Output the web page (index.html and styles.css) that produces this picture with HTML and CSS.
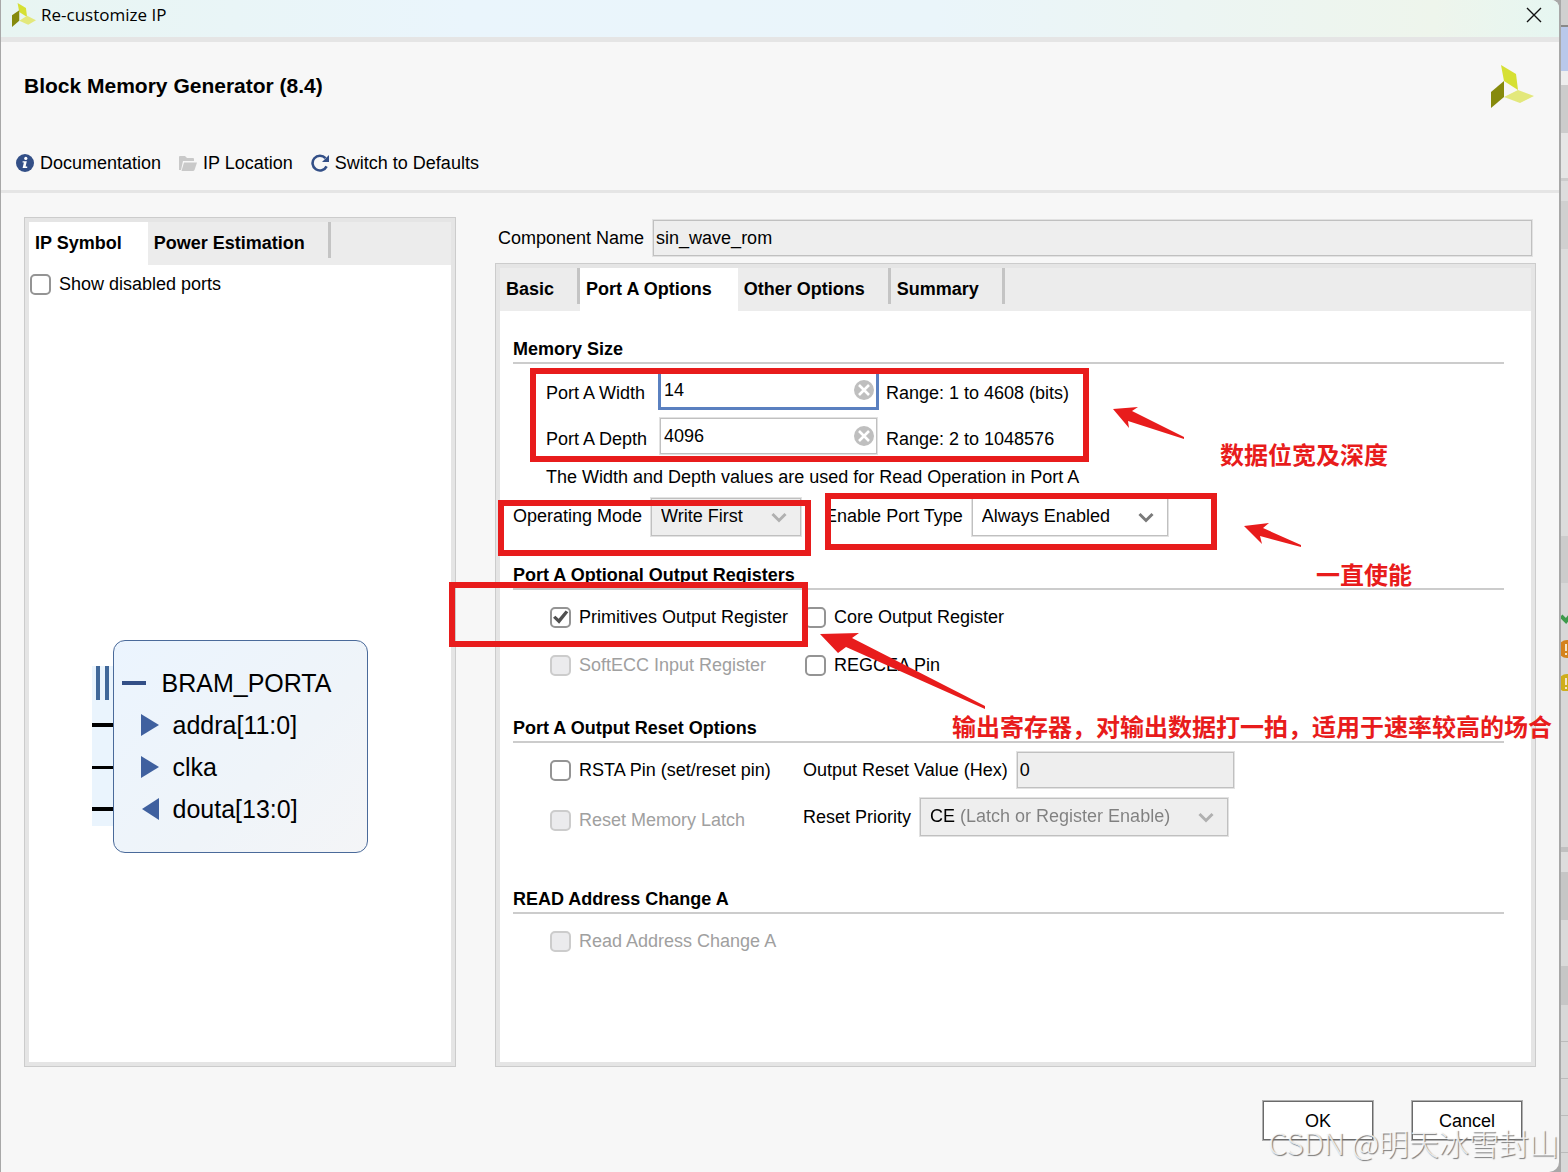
FILE: index.html
```html
<!DOCTYPE html>
<html lang="en">
<head>
    <meta charset="UTF-8">
    <meta content="width=device-width, initial-scale=1.0" name="viewport">
    <title>Re-customize IP</title>
    <link rel="stylesheet" href="styles.css">
</head>
<body>
<main class="dialog">
    <div class="titlebar">
        <svg class="titlebar-logo" viewBox="0 0 43 43">
            <path fill="#d6e034" d="M10 0 25 9 27 25 13 16z"/>
            <path fill="#868a0c" d="M0 22 13 13V32L0 43z"/>
            <path fill="#e3e87c" d="M13 32 27 23 43 31 29 39z"/>
        </svg>
        <span class="titlebar-text">Re-customize IP</span>
        <button class="close" aria-label="Close">
            <svg width="16" height="16" viewBox="0 0 16 16"><path d="M1 1 15 15M15 1 1 15" stroke="#111" stroke-width="1.4"/></svg>
        </button>
    </div>

    <header class="header">
        <div class="header-top">
            <h1>Block Memory Generator (8.4)</h1>
            <svg width="43" height="43" viewBox="0 0 43 43">
                <path fill="#d6e034" d="M10 0 25 9 27 25 13 16z"/>
                <path fill="#868a0c" d="M0 27 13 16V32L0 43z"/>
                <path fill="#e3e87c" d="M13 32 27 25 43 31 29 38z"/>
            </svg>
        </div>
        <div class="toolbar">
            <button class="tool">
                <svg width="18" height="18" viewBox="0 0 18 18">
                    <circle cx="9" cy="9" r="9" fill="#334f87"/>
                    <circle cx="9.8" cy="4.4" r="1.6" fill="#fff"/>
                    <path d="M6.6 7.2H10.8L9.6 12.6H11.2V14H6.6L7.9 8.6H6.6z" fill="#fff"/>
                </svg>
                Documentation
            </button>
            <button class="tool">
                <svg width="18" height="18" viewBox="0 0 18 18" fill="#c9c9c9">
                    <path d="M0 16V3Q0 2 1 2H6L8 4H14Q15 4 15 5V7H4L2 16z"/>
                    <path d="M5 8.5H18L15.5 16Q15 17 14 17H2.5z"/>
                </svg>
                IP Location
            </button>
            <button class="tool">
                <svg width="18" height="18" viewBox="0 0 18 18">
                    <path d="M14.5 4.2A7.4 7.4 0 1 0 15.6 12.4" fill="none" stroke="#334f87" stroke-width="2.6"/>
                    <path d="M18 1V8H11z" fill="#334f87"/>
                </svg>
                Switch to Defaults
            </button>
        </div>
    </header>

    <div class="panes">
        <section class="panel symbol-panel">
            <div class="tabs" role="tablist">
                <button class="tab active" role="tab">IP Symbol</button>
                <button class="tab" role="tab">Power Estimation</button>
            </div>
            <label class="check show-ports"><input type="checkbox"> Show disabled ports</label>
            <div class="symbol">
                <svg class="pins" width="21" height="160" viewBox="0 0 21 160">
                    <path fill="#eaf4fd" d="M0 0H21V160H0z"/>
                    <path fill="#416899" d="M4 0H8V34H4zM13 0H17V34H13z"/>
                    <path fill="#000" d="M0 57H21V61H0zM0 100H21V103H0zM0 141H21V145H0z"/>
                </svg>
                <div class="port port-group"><svg width="24" height="4"><path fill="#334f87" d="M0 0H24V4H0z"/></svg>BRAM_PORTA</div>
                <div class="port"><svg width="18" height="22"><path fill="#3f609f" d="M0 0 18 11 0 22z"/></svg>addra[11:0]</div>
                <div class="port"><svg width="18" height="22"><path fill="#3f609f" d="M0 0 18 11 0 22z"/></svg>clka</div>
                <div class="port"><svg width="18" height="22"><path fill="#3f609f" d="M18 0 1 11 18 22z"/></svg>douta[13:0]</div>
            </div>
        </section>

        <div class="config">
            <div class="name-row">
                <label for="component">Component Name</label>
                <input class="field" id="component" type="text" value="sin_wave_rom" readonly>
            </div>
            <section class="panel options-panel">
                <div class="tabs" role="tablist">
                    <button class="tab" role="tab">Basic</button>
                    <button class="tab active" role="tab">Port A Options</button>
                    <button class="tab" role="tab">Other Options</button>
                    <button class="tab" role="tab">Summary</button>
                </div>
                <div class="options">
                    <div class="group">
                        <h2>Memory Size</h2>
                        <div class="sizes">
                            <div class="size-row">
                                <label class="size-label" for="width">Port A Width</label>
                                <div class="clearable">
                                    <input class="field editable focused" id="width" type="text" value="14">
                                    <button class="clear" aria-label="Clear width">
                                        <svg width="20" height="20" viewBox="0 0 20 20"><circle cx="10" cy="10" r="10" fill="#bfbfbf"/><path d="M5 5 15 15M15 5 5 15" stroke="#fff" stroke-width="2.6"/></svg>
                                    </button>
                                </div>
                                <span class="range">Range: 1 to 4608 (bits)</span>
                            </div>
                            <div class="size-row">
                                <label class="size-label" for="depth">Port A Depth</label>
                                <div class="clearable">
                                    <input class="field editable" id="depth" type="text" value="4096">
                                    <button class="clear" aria-label="Clear depth">
                                        <svg width="20" height="20" viewBox="0 0 20 20"><circle cx="10" cy="10" r="10" fill="#bfbfbf"/><path d="M5 5 15 15M15 5 5 15" stroke="#fff" stroke-width="2.6"/></svg>
                                    </button>
                                </div>
                                <span class="range">Range: 2 to 1048576</span>
                            </div>
                        </div>
                        <p class="note">The Width and Depth values are used for Read Operation in Port A</p>
                        <div class="mode-row">
                            <label for="mode">Operating Mode</label>
                            <div class="select disabled mode-select">
                                <select id="mode" disabled><option>Write First</option></select>
                                <svg class="chevron" width="16" height="11" viewBox="0 0 16 11"><path d="M1.5 2 8 8.5 14.5 2" fill="none" stroke="currentColor" stroke-width="3"/></svg>
                            </div>
                            <label class="enable-label" for="enable">Enable Port Type</label>
                            <div class="select enable-select">
                                <select id="enable"><option>Always Enabled</option><option>Use ENA Pin</option></select>
                                <svg class="chevron" width="16" height="11" viewBox="0 0 16 11"><path d="M1.5 2 8 8.5 14.5 2" fill="none" stroke="currentColor" stroke-width="3"/></svg>
                            </div>
                        </div>
                    </div>

                    <div class="group">
                        <h2>Port A Optional Output Registers</h2>
                        <div class="checks">
                            <label class="check"><input type="checkbox" checked> Primitives Output Register</label>
                            <label class="check"><input type="checkbox"> Core Output Register</label>
                            <label class="check off"><input type="checkbox" disabled> SoftECC Input Register</label>
                            <label class="check"><input type="checkbox"> REGCEA Pin</label>
                        </div>
                    </div>

                    <div class="group reset-group">
                        <h2>Port A Output Reset Options</h2>
                        <div class="reset">
                            <div class="reset-checks">
                                <label class="check"><input type="checkbox"> RSTA Pin (set/reset pin)</label>
                                <label class="check off"><input type="checkbox" disabled> Reset Memory Latch</label>
                            </div>
                            <div class="reset-fields">
                                <div class="reset-row">
                                    <label for="resetValue">Output Reset Value (Hex)</label>
                                    <input class="field reset-value" id="resetValue" type="text" value="0" readonly>
                                </div>
                                <div class="reset-row">
                                    <label for="priority">Reset Priority</label>
                                    <div class="select disabled priority-select">
                                        <select class="two-tone" id="priority" disabled><option>CE (Latch or Register Enable)</option></select>
                                        <svg class="chevron" width="16" height="11" viewBox="0 0 16 11"><path d="M1.5 2 8 8.5 14.5 2" fill="none" stroke="currentColor" stroke-width="3"/></svg>
                                    </div>
                                </div>
                            </div>
                        </div>
                    </div>

                    <div class="group">
                        <h2>READ Address Change A</h2>
                        <div class="checks">
                            <label class="check off"><input type="checkbox" disabled> Read Address Change A</label>
                        </div>
                    </div>
                </div>
            </section>
        </div>
    </div>

    <footer class="footer">
        <button class="btn">OK</button>
        <button class="btn">Cancel</button>
    </footer>
</main>

<!-- part of the main window behind the dialog -->
<aside class="backdrop">
    <svg class="status-icons" width="9" height="80" viewBox="0 0 9 80">
        <path d="M0 5 5 10 9 5" fill="none" stroke="#3d9a4b" stroke-width="4"/>
        <circle cx="6" cy="38" r="9" fill="#d5821c"/>
        <circle cx="6" cy="72" r="9" fill="#cfae1c"/>
        <path d="M4 33H6V40H4zM4 42H6V44H4zM4 67H6V74H4zM4 76H6V78H4z" fill="#f5e6c8"/>
    </svg>
</aside>

<!-- notes drawn over the dialog -->
<div class="notes">
    <svg class="marks" width="1568" height="1172" viewBox="0 0 1568 1172">
        <g fill="none" stroke="#e81c1c" stroke-width="6">
            <rect x="533" y="371" width="553" height="88"/>
            <rect x="501" y="503" width="307" height="50"/>
            <rect x="828" y="496" width="386" height="51"/>
            <rect x="452" y="585" width="353" height="59"/>
        </g>
        <g fill="#e81c1c">
            <path d="M1113 409 1138 407 1132 411 1184 437V439L1128 421 1129 428z"/>
            <path d="M1244 526 1269 523 1263 528 1301 545V547L1260 536 1262 544z"/>
            <path d="M820 634 859 633 852 638 985 706V709L846 647 838 653z"/>
        </g>
    </svg>
    <span class="note-text note-width">数据位宽及深度</span>
    <span class="note-text note-enable">一直使能</span>
    <span class="note-text note-register">输出寄存器，对输出数据打一拍，适用于速率较高的场合</span>
    <span class="watermark">CSDN @明天冰雪封山</span>
</div>
</body>
</html>
```

FILE: styles.css
```css
* {
    box-sizing: border-box;
}
body {
    position: relative;
    display: flex;
    min-height: 100vh;
    margin: 0;
    padding-left: 1px;
    background-color: #a8a8a8;
    font-family: "Liberation Sans", Arial, sans-serif;
    font-size: 18px;
    line-height: 22px;
    color: #000;
}
button, input, select {
    font: inherit;
    color: inherit;
}
button {
    padding: 0;
    border: none;
    background: none;
}
h1, h2, p {
    margin: 0;
}
svg {
    display: block;
    flex: none;
}
.dialog {
    flex: 1;
    display: flex;
    flex-direction: column;
    background-color: #f7f7f7;
    border-radius: 0 8px 10px 0;
    overflow: hidden;
}

/* title bar */
.titlebar {
    display: flex;
    align-items: center;
    gap: 5px;
    height: 42px;
    padding: 0 17px 8px 11px;
    border-bottom: 5px solid #e5e5e5;
    background: linear-gradient(to right, #e8f5f2, #eaf5fc 30%, #eaf5fa 60%, #eef5ec 92%, #e6f6f1);
}
.titlebar-logo {
    width: 24px;
    height: 24px;
}
.titlebar-text {
    flex: 1;
    font-family: "Open Sans", "Noto Sans", sans-serif;
    font-size: 17px;
}

/* header */
.header {
    padding: 23px 25px 16px 23px;
    border-bottom: 3px solid #e5e5e5;
}
.header-top {
    display: flex;
    align-items: center;
    justify-content: space-between;
}
h1 {
    padding-bottom: 2px;
    font-size: 21px;
    line-height: 24px;
}
.toolbar {
    display: flex;
    gap: 18px;
    margin: 44px 0 0 -8px;
}
.tool {
    display: flex;
    align-items: center;
    gap: 6px;
}

/* panels and tabs */
.panes {
    flex: 1;
    display: flex;
    gap: 39px;
    padding: 24px 23px 0;
}
.panel {
    border: 1px solid #ccc;
    padding: 4px;
    background: #fff content-box;
    box-shadow: inset 0 0 0 4px #e5e5e5;
}
.symbol-panel {
    width: 432px;
}
.tabs {
    display: flex;
    align-items: flex-start;
    height: 43px;
    background-color: #ececec;
}
.tab {
    height: 36px;
    padding: 2px 23px 0 6px;
    border-right: 3px solid #c4c4c4;
    line-height: 38px;
    font-weight: bold;
}
.tab.active {
    height: 43px;
    padding-right: 26px;
    padding-bottom: 3px;
    border-right: none;
    background-color: #fff;
}
.check {
    display: flex;
    align-items: center;
    gap: 8px;
}
.check.off {
    color: #a0a0a0;
}
.check input {
    appearance: none;
    width: 21px;
    height: 21px;
    margin: 0;
    border: 2px solid #949494;
    border-radius: 5px;
    background-color: #fff;
}
.check input:disabled {
    border-color: #ccc;
    background-color: #ebebed;
}
.check input:checked::after {
    content: "";
    display: block;
    width: 17px;
    height: 17px;
    background-color: #505050;
    clip-path: polygon(6% 54%, 20% 42%, 39% 60%, 80% 12%, 96% 22%, 42% 90%);
}
.show-ports {
    height: 38px;
    padding-left: 1px;
}

/* block symbol */
.symbol {
    position: relative;
    width: 255px;
    height: 213px;
    margin: 337px auto 0;
    padding-top: 21px;
    border: 1px solid #4a6a9a;
    border-radius: 12px;
    background: linear-gradient(135deg, #ebf4fe, #eff4f9 60%, #f4f5f7);
    font-size: 25px;
}
.pins {
    position: absolute;
    top: 25px;
    right: 100%;
    margin-right: 1px;
}
.port {
    display: flex;
    align-items: center;
    gap: 14px;
    height: 42px;
    padding-left: 27px;
}
.port-group {
    gap: 16px;
    padding-left: 8px;
}

/* fields */
.config {
    flex: 1;
    display: flex;
    flex-direction: column;
}
.name-row {
    display: flex;
    align-items: center;
    gap: 8px;
    padding: 2px 3px 6px;
}
.name-row .field {
    flex: 1;
}
.field {
    height: 38px;
    padding: 0 3px;
    border: 1px solid #e2e2e2;
    box-shadow: inset 0 0 0 1px #c0c0c0;
    background-color: #eee;
    outline: none;
}
.field.editable {
    width: 100%;
    padding: 0 4px;
    background-color: #fff;
}
.field.focused {
    border-color: #5a80c0;
    outline: 2px solid #5a80c0;
    outline-offset: -1px;
    box-shadow: inset 0 0 0 1px #5a80c0;
}
.options-panel {
    flex: 1;
}
.options {
    padding: 26px 27px 0 13px;
}
.group {
    margin-bottom: 26px;
}
h2 {
    padding: 1px 0 2px;
    border-bottom: 2px solid #ccc;
    font-size: 18px;
    line-height: 22px;
}
.sizes {
    display: grid;
    gap: 8px;
    padding: 7px 0 0 33px;
}
.size-row {
    display: flex;
    align-items: center;
}
.size-label {
    width: 113px;
    padding-top: 6px;
}
.range {
    padding: 6px 0 0 8px;
}
.clearable {
    position: relative;
    width: 219px;
}
.clear {
    position: absolute;
    top: 9px;
    right: 4px;
}
.note {
    margin: 11px 0 9px;
    padding-left: 33px;
}
.mode-row {
    display: flex;
    align-items: center;
    gap: 8px;
}
.mode-row label {
    padding-bottom: 2px;
}
.enable-label {
    margin-left: 15px;
}
.select {
    position: relative;
    height: 40px;
    border: 1px solid #e2e2e2;
    box-shadow: inset 0 0 0 1px #c0c0c0;
    background-color: #fff;
}
.select.disabled {
    background-color: #eee;
}
.select select {
    appearance: none;
    width: 100%;
    height: 100%;
    padding: 0 32px 2px 10px;
    border: none;
    background-color: transparent;
    opacity: 1;
}
.chevron {
    position: absolute;
    top: 14px;
    right: 14px;
    color: #7a7a7a;
    pointer-events: none;
}
.disabled .chevron {
    color: #b0b0b0;
}
.mode-select {
    width: 152px;
}
.enable-select {
    width: 198px;
}
.priority-select {
    width: 310px;
}
.select .two-tone {
    background: linear-gradient(to right, #000 37px, #808080 37px) text;
    color: transparent;
}
.checks {
    display: grid;
    grid-template-columns: 255px 1fr;
    grid-auto-rows: 48px;
    padding: 3px 0 1px 37px;
}
.reset-group {
    margin-bottom: 36px;
}
.reset {
    display: flex;
    padding: 8px 0 0 37px;
}
.reset-checks {
    width: 253px;
}
.reset-checks .check {
    height: 38px;
    margin-bottom: 12px;
}
.reset-fields {
    display: flex;
    flex-direction: column;
    gap: 8px;
}
.reset-row {
    display: flex;
    align-items: center;
    gap: 8px;
}
.reset-value {
    width: 219px;
}

/* footer */
.footer {
    display: flex;
    justify-content: flex-end;
    gap: 37px;
    padding: 33px 36px 31px;
}
.btn {
    width: 112px;
    height: 41px;
    border: 1px solid #b0b0b0;
    box-shadow: inset 0 0 0 1px #6a6a6a;
    background-color: #fff;
}

/* window behind */
.backdrop {
    width: 9px;
    padding-top: 611px;
    border-left: 2px solid #a8a8a8;
    background: linear-gradient(#d0d0d0 25px, #888 25px 27px, #b9c8ea 27px 71px, #eee 71px 85px, #ccc 85px 133px, #e6e6e6 133px 178px, #ccc 178px 181px, #ddd 181px 201px, #d0d0d0 201px 249px, #dcdcdc 249px 536px, #ccc 536px 583px, #d8d8d8 583px 847px, #c0c0c0 847px 852px, #ddd 852px 872px, #c6c6c6 872px 920px, #dadada 920px 966px, #c6c6c6 966px 1005px, #d8d8d8 1005px 1041px, #bbb 1041px 1042px, #d8d8d8 1042px 1078px, #bbb 1078px 1079px, #d8d8d8 1079px 1115px, #bbb 1115px 1116px, #d8d8d8 1116px 1152px, #bbb 1152px 1153px, #d8d8d8 1153px);
}

/* notes */
.notes {
    position: absolute;
    inset: 0;
    overflow: hidden;
    pointer-events: none;
}
.marks {
    position: absolute;
    top: 0;
    left: 0;
}
.note-text {
    position: absolute;
    font-family: "Noto Sans CJK SC", sans-serif;
    font-size: 24px;
    line-height: 32px;
    font-weight: bold;
    color: #e81c1c;
    white-space: nowrap;
}
.note-width {
    top: 438px;
    left: 1220px;
}
.note-enable {
    top: 558px;
    left: 1316px;
}
.note-register {
    top: 710px;
    left: 952px;
}
.watermark {
    position: absolute;
    right: 9px;
    bottom: 10px;
    font-family: "Noto Sans CJK SC", sans-serif;
    font-size: 30px;
    line-height: 40px;
    font-weight: 300;
    color: rgba(255, 255, 255, 0.8);
    text-shadow: 1px 1px 1px #777;
    white-space: nowrap;
}
```
